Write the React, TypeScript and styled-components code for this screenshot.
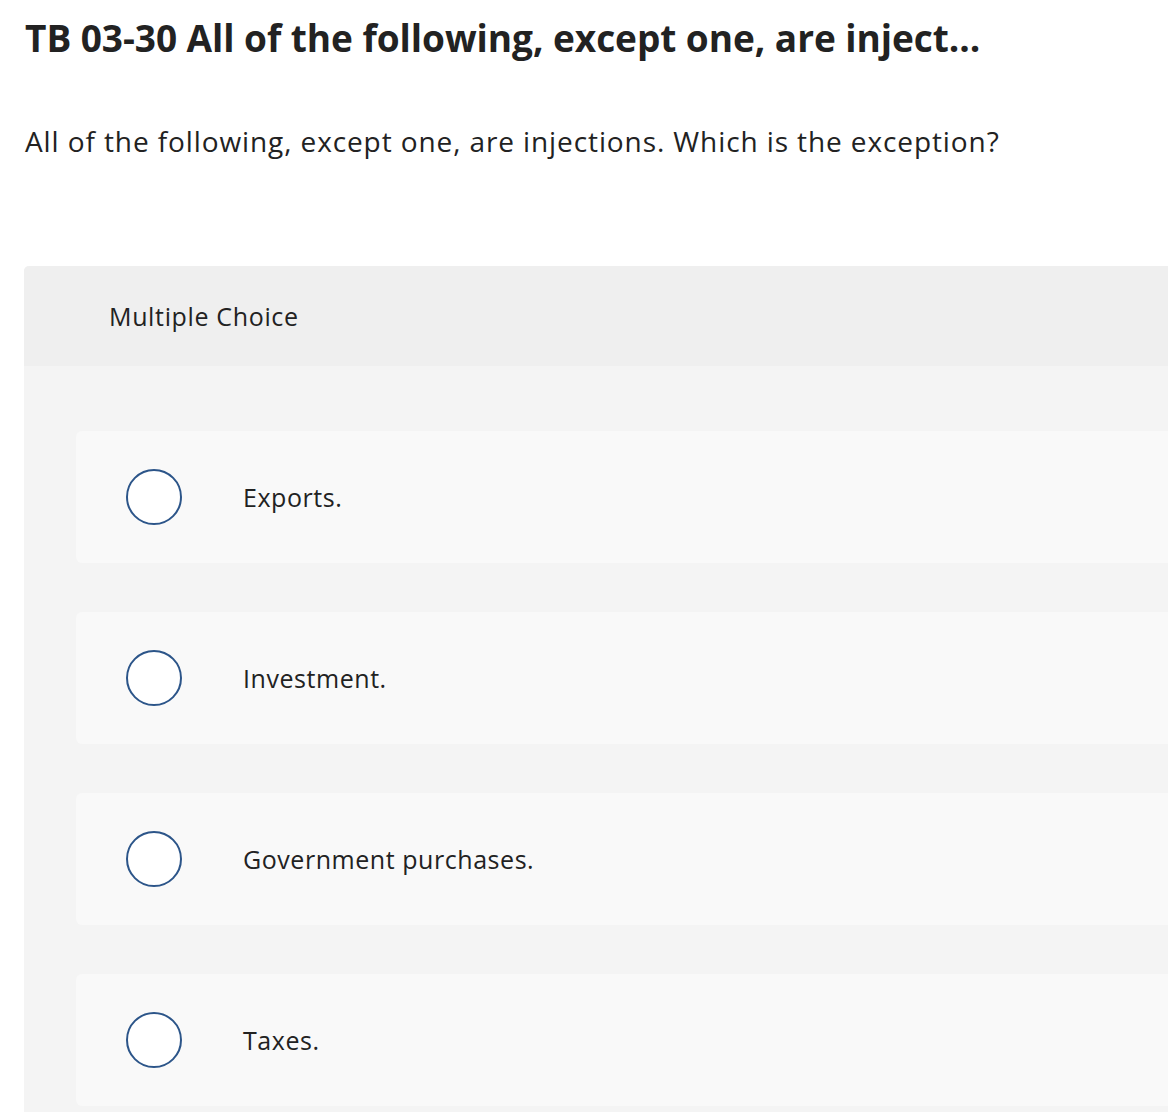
import React from "react";
import styled, { createGlobalStyle } from "styled-components";

const Global = createGlobalStyle`
  html, body { margin: 0; padding: 0; background: #ffffff; overflow-x: hidden; }
  body { font-family: "Open Sans", Lato, "Liberation Sans", sans-serif; color: #222222; }
`;

const Page = styled.div`
  display: flex;
  flex-direction: column;
  padding: 13px 0 0 24px;
  width: 1200px;
`;

const Title = styled.h1`
  margin: 0 0 0 1px;
  font-size: 37px;
  font-weight: 700;
  line-height: 50px;
  color: #222222;
  letter-spacing: -0.05px;
`;

const Prompt = styled.p`
  margin: 54px 0 0 1px;
  font-size: 28px;
  line-height: 48px;
  font-weight: 400;
  color: #222222;
  letter-spacing: 0.9px;
`;

const Panel = styled.section`
  margin-top: 101px;
  background: #f4f4f4;
  border-radius: 5px 0 0 0;
  display: flex;
  flex-direction: column;
`;

const PanelHeader = styled.div`
  height: 100px;
  background: #efefef;
  border-radius: 5px 0 0 0;
  display: flex;
  align-items: center;
  padding-left: 85px;
  font-size: 25px;
  letter-spacing: 0.65px;
  color: #222222;
`;

const Options = styled.div`
  display: flex;
  flex-direction: column;
  gap: 49px;
  padding: 65px 0 8px 52px;
`;

const OptionCard = styled.label`
  height: 132px;
  background: #f9f9f9;
  border-radius: 6px 0 0 6px;
  display: flex;
  align-items: center;
  padding-left: 50px;
`;

const Radio = styled.span`
  width: 52px;
  height: 52px;
  border-radius: 50%;
  border: 2px solid #2c5589;
  background: #ffffff;
  flex-shrink: 0;
`;

const OptionText = styled.span`
  margin-left: 61px;
  font-size: 25px;
  letter-spacing: 0.55px;
  color: #222222;
`;

const options = ["Exports.", "Investment.", "Government purchases.", "Taxes."];

export default function App() {
  return (
    <>
      <Global />
      <Page>
        <Title>TB 03-30 All of the following, except one, are inject...</Title>
        <Prompt>All of the following, except one, are injections. Which is the exception?</Prompt>
        <Panel>
          <PanelHeader>Multiple Choice</PanelHeader>
          <Options>
            {options.map((o) => (
              <OptionCard key={o}>
                <Radio />
                <OptionText>{o}</OptionText>
              </OptionCard>
            ))}
          </Options>
        </Panel>
      </Page>
    </>
  );
}
